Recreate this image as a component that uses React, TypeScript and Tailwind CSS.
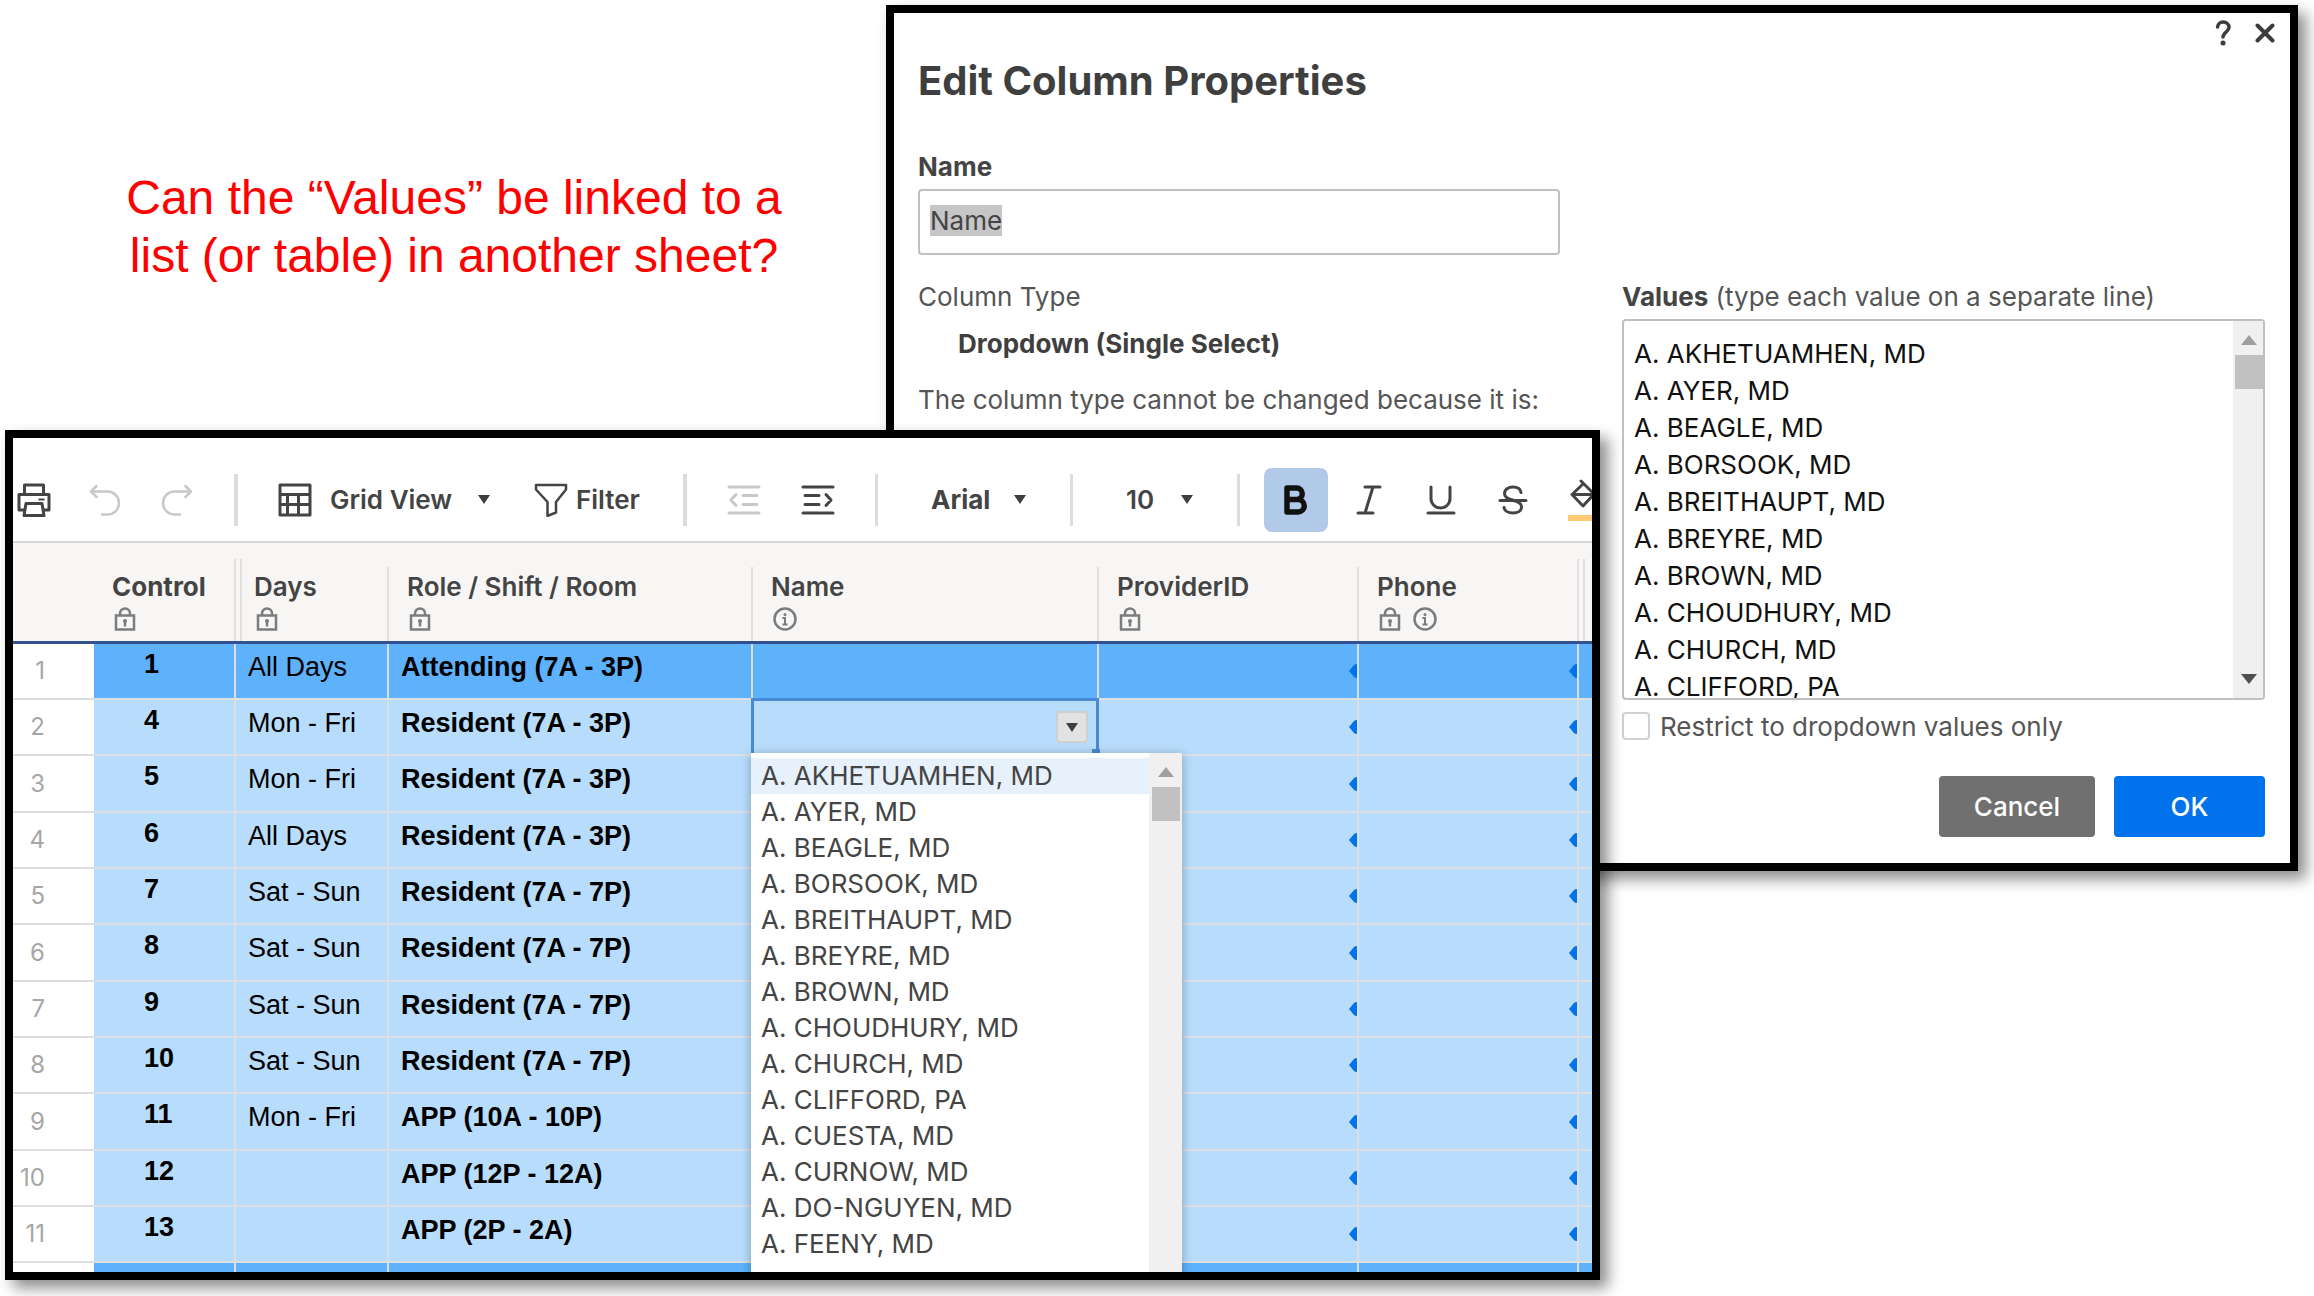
import { useEffect, useRef, type ReactNode } from "react";

const VALUES = [
  "A. AKHETUAMHEN, MD",
  "A. AYER, MD",
  "A. BEAGLE, MD",
  "A. BORSOOK, MD",
  "A. BREITHAUPT, MD",
  "A. BREYRE, MD",
  "A. BROWN, MD",
  "A. CHOUDHURY, MD",
  "A. CHURCH, MD",
  "A. CLIFFORD, PA",
  "A. CUESTA, MD",
  "A. CURNOW, MD",
  "A. DO-NGUYEN, MD",
  "A. FEENY, MD",
];

const ROWS = [
  { control: "1", days: "All Days", role: "Attending (7A - 3P)" },
  { control: "4", days: "Mon - Fri", role: "Resident (7A - 3P)" },
  { control: "5", days: "Mon - Fri", role: "Resident (7A - 3P)" },
  { control: "6", days: "All Days", role: "Resident (7A - 3P)" },
  { control: "7", days: "Sat - Sun", role: "Resident (7A - 7P)" },
  { control: "8", days: "Sat - Sun", role: "Resident (7A - 7P)" },
  { control: "9", days: "Sat - Sun", role: "Resident (7A - 7P)" },
  { control: "10", days: "Sat - Sun", role: "Resident (7A - 7P)" },
  { control: "11", days: "Mon - Fri", role: "APP (10A - 10P)" },
  { control: "12", days: "", role: "APP (12P - 12A)" },
  { control: "13", days: "", role: "APP (2P - 2A)" },
];

function Caret({ className = "text-[#3f3f3f]" }: { className?: string }) {
  return (
    <svg viewBox="0 0 12 9" className={`h-[9px] w-3 ${className}`} fill="currentColor" aria-hidden="true">
      <path d="M0 0h12L6 9z" />
    </svg>
  );
}

function PrintIcon() {
  return (
    <svg viewBox="0 0 34 34" className="h-[34px] w-[34px]" fill="none" stroke="currentColor" strokeWidth="3" strokeLinejoin="round" aria-hidden="true">
      <path d="M7.500 11V2h19v9M7.500 27H2V11.500h30V27h-5.500" />
      <path d="M9 20.500h16l2 12H7z" />
      <path d="M21.500 16.500h6" strokeWidth="2" />
    </svg>
  );
}

function UndoIcon({ flip = false }: { flip?: boolean }) {
  return (
    <svg viewBox="0 0 32 34" className={flip ? "h-[34px] w-8 -scale-x-100" : "h-[34px] w-8"} fill="none" stroke="currentColor" strokeWidth="2.5" strokeLinecap="round" strokeLinejoin="round" aria-hidden="true">
      <path d="M7.500 3L2 8.500l5.500 5.500M2 8.500h16.500a11.500 11.500 0 0 1 0 23H13" />
    </svg>
  );
}

function GridIcon() {
  return (
    <svg viewBox="0 0 34 34" className="h-[34px] w-[34px]" fill="none" stroke="currentColor" strokeWidth="2.5" strokeLinejoin="round" aria-hidden="true">
      <path d="M2 2h30v30H2zM2 11.500h30M2 21.500h30M9.500 11.500V32M20.500 11.500V32" strokeWidth="3" />
    </svg>
  );
}

function FilterIcon() {
  return (
    <svg viewBox="0 0 34 34" className="h-[34px] w-[34px]" fill="none" stroke="currentColor" strokeWidth="2.5" strokeLinejoin="round" aria-hidden="true">
      <path d="M2 2h30v4.500L22 19v10.500L13.500 33V19L2 6.500z" />
    </svg>
  );
}

function IndentIcon({ out = false }: { out?: boolean }) {
  return (
    <svg viewBox="0 0 34 30" className="h-[30px] w-[34px]" fill="none" stroke="currentColor" strokeWidth="3" strokeLinecap="round" strokeLinejoin="round" aria-hidden="true">
      <path d="M2 2h30M2 28h30" />
      {out ? <path d="M16 10.500h14M16 19.500h14M9 9.500L4 15l5 5.500" /> : <path d="M4 10.500h14M4 19.500h14M25 9.500l5 5.500-5 5.500" />}
    </svg>
  );
}

function BoldIcon() {
  return (
    <svg viewBox="0 0 24 30" className="h-[30px] w-6" fill="none" stroke="#111" strokeWidth="5.5" strokeLinejoin="round" aria-hidden="true">
      <path d="M3 3h9.500a5.500 5.500 0 0 1 0 11.500H3zM3 14.500h11a6 6 0 0 1 0 12.500H3z" />
    </svg>
  );
}

function ItalicIcon() {
  return (
    <svg viewBox="0 0 26 30" className="h-[30px] w-[26px]" fill="none" stroke="currentColor" strokeWidth="3" strokeLinecap="round" aria-hidden="true">
      <path d="M9 2h15M2 28h15M17 2L9 28" />
    </svg>
  );
}

function UnderlineIcon() {
  return (
    <svg viewBox="0 0 30 30" className="h-[30px] w-[30px]" fill="none" stroke="currentColor" strokeWidth="3" strokeLinecap="round" aria-hidden="true">
      <path d="M5 2v11.500a9.500 9.500 0 0 0 19 0V2M2 28h26" />
    </svg>
  );
}

function StrikeIcon() {
  return (
    <svg viewBox="0 0 30 30" className="h-[30px] w-[30px]" fill="none" stroke="currentColor" strokeWidth="3" strokeLinecap="round" aria-hidden="true">
      <path d="M23 7.500C22.500 4 19.500 2 15 2S6.500 4.500 6.500 8.500c0 3.500 3 5.500 8.500 6.500M2 15.500h26M15 15.500c5.500 1 8.500 2.500 8.500 6.500S19.500 28 15 28s-8.500-2-9-5.500" />
    </svg>
  );
}

function FillIcon() {
  return (
    <svg viewBox="0 0 34 42" className="h-[42px] w-[34px]" fill="none" stroke="currentColor" strokeWidth="3" strokeLinejoin="round" strokeLinecap="round" aria-hidden="true">
      <path d="M13 2l13 13L15 27 4 15.500 15 5M4 15.500h21" />
      <path d="M0 39h34" stroke="#ffca74" strokeWidth="6" strokeLinecap="butt" />
    </svg>
  );
}

function LockIcon() {
  return (
    <svg viewBox="0 0 22 24" className="h-6 w-[22px]" fill="none" stroke="currentColor" strokeWidth="2.5" aria-label="Locked">
      <path d="M2 8.500h18V22.500H2zM6 8.500V6.500a5 5 0 0 1 10 0v2" />
      <circle cx="11" cy="14" r="2" fill="currentColor" stroke="none" />
      <path d="M11 14v5.500" />
    </svg>
  );
}

function InfoIcon() {
  return (
    <svg viewBox="0 0 24 24" className="h-6 w-6" fill="none" stroke="currentColor" strokeWidth="2" aria-label="Info">
      <circle cx="12" cy="12" r="10.500" strokeWidth="2.5" />
      <path d="M9.500 11H12v6.500M9.500 17.500h5" />
      <circle cx="12" cy="7.500" r="1.500" fill="currentColor" stroke="none" />
    </svg>
  );
}

function ScrollBar({ down = false }: { down?: boolean }) {
  return (
    <div className={down ? "flex w-[30px] shrink-0 flex-col items-end bg-[#f0f0f0] pt-3.5" : "flex w-[33px] shrink-0 flex-col items-center bg-[#f0f0f0] pt-3.5"}>
      <svg viewBox="0 0 16 10" className={down ? "mr-1.5 h-2.5 w-4" : "h-2.5 w-4"} fill="#a0a0a0" aria-hidden="true">
        <path d="M8 0l8 10H0z" />
      </svg>
      <div className="mt-2.5 h-[34px] w-7 bg-[#c1c1c1]" />
      {down && (
        <svg viewBox="0 0 16 10" className="mt-auto mr-1.5 mb-3.5 h-2.5 w-4" fill="#505050" aria-hidden="true">
          <path d="M0 0h16L8 10z" />
        </svg>
      )}
    </div>
  );
}

function EditColumnDialog() {
  const nameRef = useRef<HTMLInputElement>(null);
  useEffect(() => {
    nameRef.current?.focus({ preventScroll: true });
    nameRef.current?.select();
  }, []);

  return (
    <section
      role="dialog"
      aria-labelledby="dialog-title"
      className="absolute top-[5px] right-4 left-[886px] border-8 border-black bg-white pr-[25px] pb-[26px] pl-6 text-[26px] text-[#555] shadow-[8px_8px_14px_rgba(0,0,0,0.45)]"
    >
      <div className="-mr-3 flex h-10 items-center justify-end gap-5 text-[#3c3c3c]">
        <button type="button" aria-label="Help" className="p-0.5">
          <svg viewBox="0 0 16 26" className="h-[26px] w-4" fill="none" stroke="currentColor" strokeWidth="3.5" strokeLinecap="round" strokeLinejoin="round">
            <path d="M2.500 7A5.500 5.500 0 0 1 8 2c3.500 0 6 2 6 5.500 0 4-6 5-6 9.500" />
            <circle cx="8" cy="23" r="2.500" fill="currentColor" stroke="none" />
          </svg>
        </button>
        <button type="button" aria-label="Close" className="p-0.5">
          <svg viewBox="0 0 20 20" className="h-5 w-5" fill="none" stroke="currentColor" strokeWidth="4" strokeLinecap="round">
            <path d="M2.500 2.500l15 15M17.500 2.500l-15 15" />
          </svg>
        </button>
      </div>
      <h1 id="dialog-title" className="mt-1 text-[40px] leading-12 font-bold text-[#3f3f3f]">
        Edit Column Properties
      </h1>
      <div className="mt-[46px] w-[642px]">
        <label htmlFor="column-name" className="block leading-8 font-bold text-[#444]">
          Name
        </label>
        <input
          id="column-name"
          ref={nameRef}
          type="text"
          defaultValue="Name"
          className="mt-1.5 h-[66px] w-full rounded border-2 border-[#c0c0c0] px-2.5 pb-1 text-[#444] outline-none selection:bg-[#c6c6c6] selection:text-[#444]"
        />
      </div>
      <div className="mt-[26px] flex items-start justify-between">
        <div className="leading-8">
          <p>Column Type</p>
          <p className="mt-[15px] pl-10 font-bold text-[#3f3f3f]">Dropdown (Single Select)</p>
          <p className="mt-6">The column type cannot be changed because it is:</p>
        </div>
        <div className="w-[643px]">
          <label htmlFor="column-values" className="block leading-8">
            <b className="font-bold text-[#444]">Values</b> (type each value on a separate line)
          </label>
          <div className="mt-1.5 flex h-[381px] rounded border-2 border-[#c0c0c0]">
            <textarea
              id="column-values"
              readOnly
              value={VALUES.slice(0, 10).join("\n")}
              className="flex-1 resize-none overflow-hidden pt-3.5 pl-2.5 leading-[37px] text-[#111] outline-none"
            />
            <ScrollBar down />
          </div>
          <div className="mt-3 flex h-7 items-center gap-2.5">
            <input id="restrict" type="checkbox" className="h-7 w-7 appearance-none rounded border-2 border-[#d0d0d0] bg-white" />
            <label htmlFor="restrict">Restrict to dropdown values only</label>
          </div>
          <div className="mt-9 flex justify-end gap-[19px] font-medium text-white">
            <button type="button" className="h-[61px] w-[156px] rounded bg-[#707070]">
              Cancel
            </button>
            <button type="button" className="h-[61px] w-[151px] rounded bg-[#0073ec]">
              OK
            </button>
          </div>
        </div>
      </div>
    </section>
  );
}

function Toolbar() {
  return (
    <div role="toolbar" aria-label="Formatting" className="flex h-[105px] items-center overflow-hidden border-b-2 border-[#d8d8d8] pt-5 pl-1 text-[26px] font-semibold whitespace-nowrap text-[#444]">
      <button type="button" aria-label="Print"><PrintIcon /></button>
      <button type="button" aria-label="Undo" className="ml-[38px] text-[#c8c8c8]"><UndoIcon /></button>
      <button type="button" aria-label="Redo" className="ml-10 text-[#c8c8c8]"><UndoIcon flip /></button>
      <div className="ml-[41px] h-[52px] w-1 shrink-0 bg-[#dcdcdc]" />
      <button type="button" className="ml-10 flex items-center">
        <GridIcon />
        <span className="ml-[18px] w-[148px] text-left">Grid View</span>
        <Caret />
      </button>
      <button type="button" className="ml-11 flex items-center">
        <FilterIcon />
        <span className="ml-2 w-[107px] text-left">Filter</span>
      </button>
      <div className="h-[52px] w-1 shrink-0 bg-[#dcdcdc]" />
      <button type="button" aria-label="Outdent" className="ml-10 text-[#c8c8c8]"><IndentIcon out /></button>
      <button type="button" aria-label="Indent" className="ml-10"><IndentIcon /></button>
      <div className="ml-10 h-[52px] w-[3px] shrink-0 bg-[#dcdcdc]" />
      <button type="button" className="ml-[53px] flex items-center">
        <span className="w-[83px] text-left font-bold">Arial</span>
        <Caret />
      </button>
      <div className="ml-11 h-[52px] w-[3px] shrink-0 bg-[#dcdcdc]" />
      <button type="button" className="ml-[53px] flex items-center">
        <span className="w-[55px] text-left">10</span>
        <Caret />
      </button>
      <div className="ml-11 h-[52px] w-[3px] shrink-0 bg-[#dcdcdc]" />
      <button type="button" aria-label="Bold" aria-pressed="true" className="ml-6 flex h-16 w-16 shrink-0 items-center justify-center rounded-lg bg-[#b2cae9]">
        <BoldIcon />
      </button>
      <button type="button" aria-label="Italic" className="ml-7"><ItalicIcon /></button>
      <button type="button" aria-label="Underline" className="ml-11"><UnderlineIcon /></button>
      <button type="button" aria-label="Strikethrough" className="ml-[42px]"><StrikeIcon /></button>
      <button type="button" aria-label="Fill color" className="ml-10 shrink-0"><FillIcon /></button>
    </div>
  );
}

function HeadCell({ title, children, bold = false, double = false, frozen = false }: { title: string; children: ReactNode; bold?: boolean; double?: boolean; frozen?: boolean }) {
  return (
    <th scope="col" className="h-[101px] border-b-3 border-[#33508f] p-0 align-bottom">
      <div className={double ? "flex h-[82px]" : frozen ? "flex h-[82px] border-r-2 border-[#e0e0e0]" : "flex h-[82px] pt-2"}>
        {double && <div className="ml-1 w-0.5 bg-[#e0e0e0]" />}
        <div className={double ? "flex-1 pt-3 pl-3 text-left" : frozen ? "flex-1 pt-3 pl-[18px] text-left" : "flex-1 border-r-2 border-[#e0e0e0] pt-1 pl-[18px] text-left"}>
          <div className={bold ? "leading-8 font-bold" : "leading-8 font-semibold"}>{title}</div>
          <div className="flex gap-3 pt-1 pl-0.5 text-[#7c7c7c]">{children}</div>
        </div>
        {double && <div className="mt-2 w-0.5 bg-[#e0e0e0]" />}
      </div>
    </th>
  );
}

function LinkMark() {
  return (
    <svg viewBox="0 0 8 14" className="ml-auto h-3.5 w-2" fill="#0073ec" aria-label="Linked cell">
      <path d="M0 7l5-6q1-1 3-1v14q-2 0-3-1z" />
    </svg>
  );
}

function NameDropdown() {
  return (
    <div className="absolute top-[53px] -left-0.5 z-10 flex h-[600px] w-[431px] bg-white shadow-[0_2px_10px_rgba(0,0,0,0.3)]">
      <ul role="listbox" aria-label="Name" className="flex-1 pt-[5px] font-[Inter,sans-serif] text-[26px] leading-9 font-normal text-[#444]">
        {VALUES.map((value, index) => (
          <li key={value} role="option" aria-selected={index === 0} className="pl-2.5 aria-selected:bg-[#e6f1fc]">
            {value}
          </li>
        ))}
      </ul>
      <ScrollBar />
    </div>
  );
}

function Sheet() {
  return (
    <section aria-label="Sheet" className="absolute top-[430px] right-[714px] left-[5px] overflow-hidden border-8 border-black bg-white shadow-[8px_8px_14px_rgba(0,0,0,0.45)]">
      <Toolbar />
      <table className="w-full table-fixed border-separate border-spacing-0">
        <colgroup>
          <col className="w-[81px]" />
          <col className="w-[142px]" />
          <col className="w-[153px]" />
          <col className="w-[364px]" />
          <col className="w-[346px]" />
          <col className="w-[260px]" />
          <col className="w-[220px]" />
          <col />
        </colgroup>
        <thead className="bg-[#f7f6f4] text-[26px] text-[#444]">
          <tr>
            <th className="border-b-3 border-[#33508f]" aria-label="Row" />
            <HeadCell title="Control" bold frozen><LockIcon /></HeadCell>
            <HeadCell title="Days" double><LockIcon /></HeadCell>
            <HeadCell title="Role / Shift / Room"><LockIcon /></HeadCell>
            <HeadCell title="Name"><InfoIcon /></HeadCell>
            <HeadCell title="ProviderID"><LockIcon /></HeadCell>
            <HeadCell title="Phone" frozen><LockIcon /><InfoIcon /></HeadCell>
            <th className="border-b-3 border-[#33508f] p-0 align-bottom" aria-label="More">
              <div className="ml-1 h-[82px] w-0.5 bg-[#e0e0e0]" />
            </th>
          </tr>
        </thead>
        <tbody className="font-['Liberation_Sans',sans-serif] text-[27px] leading-8 text-black [&_td]:border-b-2 [&_td]:border-[#dbdfe3] [&_td]:p-0">
          {ROWS.map((row, index) => (
            <tr key={row.control} className="h-14 bg-[#b8dcfb] first:bg-[#5eb1fb] nth-[3n]:h-[57px]">
              <td className="bg-white font-[Inter,sans-serif] text-2xl text-[#a6a6a6]">
                <div className="w-8 text-right">{index + 1}</div>
              </td>
              <td className="border-r-2 align-top font-bold">
                <div className="pt-1 pl-[50px]">{row.control}</div>
              </td>
              <td className="border-r-2 align-top">
                <div className="pt-[7px] pl-3">{row.days}</div>
              </td>
              <td className="border-r-2 align-top font-bold">
                <div className="pt-[7px] pl-3">{row.role}</div>
              </td>
              {index === 1 ? (
                <td className="relative border-r-2">
                  <div className="absolute -inset-0.5 flex items-center justify-end border-3 border-[#4a8ad4] pr-2">
                    <button type="button" aria-label="Open list" className="flex h-8 w-8 items-center justify-center rounded border-2 border-[#cfcfcf] bg-[#e2e2e2]">
                      <Caret />
                    </button>
                    <span className="absolute -right-1 -bottom-1 h-2 w-2 bg-[#4a8ad4]" />
                  </div>
                  <NameDropdown />
                </td>
              ) : (
                <td className="border-r-2" />
              )}
              <td className="border-r-2"><LinkMark /></td>
              <td className="border-r-2"><LinkMark /></td>
              <td />
            </tr>
          ))}
          <tr className="h-[9px] bg-[#5eb1fb]">
            <td className="border-none! bg-white" />
            {["control", "days", "role", "name", "provider", "phone"].map((key) => (
              <td key={key} className="border-r-2 border-b-0!" />
            ))}
            <td className="border-none!" />
          </tr>
        </tbody>
      </table>
    </section>
  );
}

export default function App() {
  return (
    <main className="relative min-h-screen overflow-hidden bg-white font-[Inter,sans-serif]">
      <p className="w-[908px] pt-[169px] text-center font-['Liberation_Sans',sans-serif] text-5xl leading-[58px] text-[#ff0000]">
        Can the “Values” be linked to a
        <br />
        list (or table) in another sheet?
      </p>
      <EditColumnDialog />
      <Sheet />
    </main>
  );
}
